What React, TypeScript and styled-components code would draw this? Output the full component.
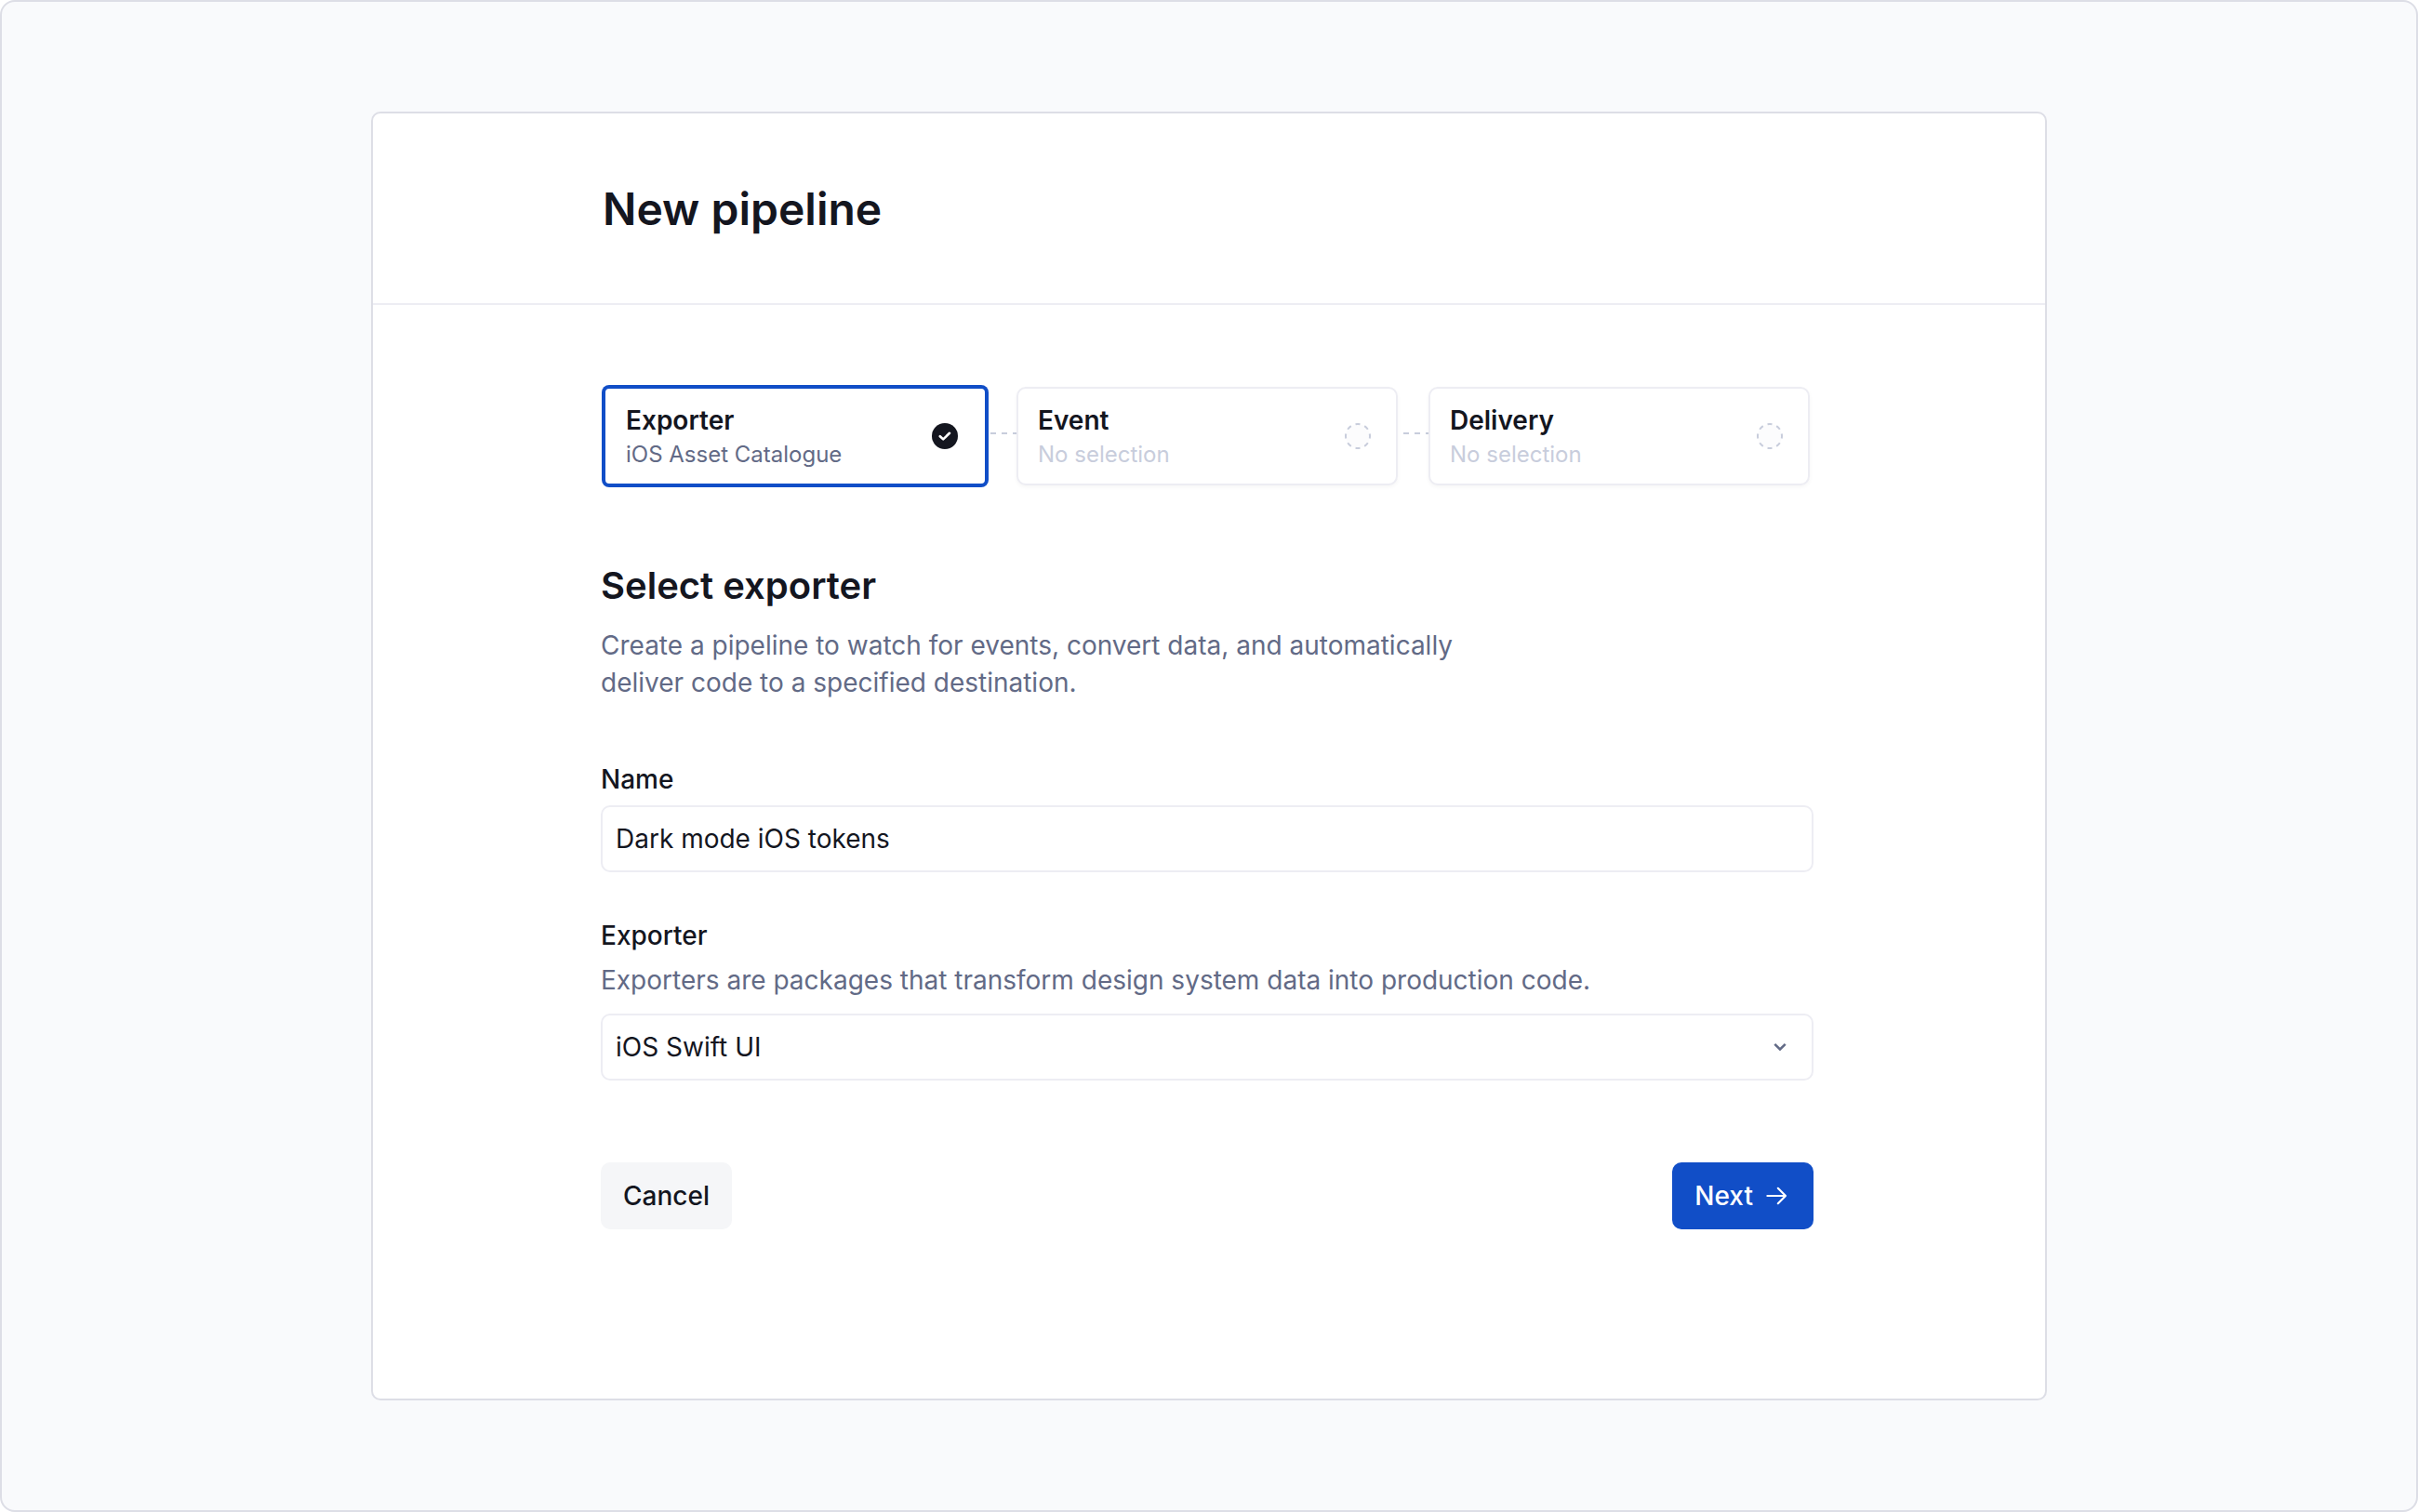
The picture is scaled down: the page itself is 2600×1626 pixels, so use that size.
import React, { useState } from "react";
import styled, { createGlobalStyle } from "styled-components";

const colors = {
  ink: "#14161f",
  muted: "#626a86",
  faint: "#c8cddc",
  line: "#ededf3",
  frame: "#dddee6",
  canvas: "#f9fafc",
  subtle: "#f5f6f8",
  primary: "#114ec7",
};

const GlobalStyle = createGlobalStyle`
  *, *::before, *::after { box-sizing: border-box; }
  body {
    margin: 0;
    background: #ffffff;
    color: ${colors.ink};
    font-family: Inter, "Liberation Sans", sans-serif;
    font-size: 28px;
    line-height: 40px;
    -webkit-font-smoothing: antialiased;
  }
  button, input, select { font: inherit; color: inherit; }
`;

const Canvas = styled.main`
  display: flex;
  justify-content: center;
  min-height: 100vh;
  padding: 118px 48px;
  background: ${colors.canvas};
  border: 2px solid ${colors.frame};
  border-radius: 16px;
`;

const Panel = styled.section`
  width: 100%;
  max-width: 1802px;
  background: #ffffff;
  border: 2px solid ${colors.frame};
  border-radius: 10px;
`;

const PanelHeader = styled.header`
  padding: 75px 247px 73px;
  border-bottom: 2px solid ${colors.line};
`;

const Title = styled.h1`
  margin: 0;
  font-size: 48px;
  line-height: 56px;
  font-weight: 600;
`;

const Form = styled.form`
  display: flex;
  flex-direction: column;
  padding: 88px 249px 88px 245px;
`;

/* The dashed connector runs behind the whole row and shows in the gaps. */
const Steps = styled.ol`
  display: grid;
  grid-template-columns: repeat(3, 1fr);
  gap: 33px;
  margin: 0 4px;
  padding: 0;
  list-style: none;
  background: linear-gradient(90deg, ${colors.faint} 6px, transparent 6px) 7px
    49px / 12px 2px repeat-x;
`;

const StepItem = styled.li`
  display: flex;
`;

const StepButton = styled.button<{ $active?: boolean }>`
  flex: 1;
  display: flex;
  align-items: center;
  justify-content: space-between;
  margin: ${(p) => (p.$active ? "0 -1px" : "0")};
  padding: 14px ${(p) => (p.$active ? 29 : 27)}px 14px
    ${(p) => (p.$active ? 22 : 21)}px;
  text-align: left;
  background: #ffffff;
  border: 2px solid ${(p) => (p.$active ? colors.primary : colors.line)};
  border-radius: ${(p) => (p.$active ? 6 : 10)}px;
  box-shadow: ${(p) =>
    p.$active
      ? `0 0 0 2px ${colors.primary}`
      : "0 2px 4px rgba(20, 22, 31, 0.04)"};
`;

const StepText = styled.span`
  display: flex;
  flex-direction: column;
`;

const StepName = styled.span`
  font-weight: 600;
`;

const StepValue = styled.span<{ $empty?: boolean }>`
  font-size: 24px;
  line-height: 34px;
  color: ${(p) => (p.$empty ? colors.faint : colors.muted)};
`;

const SectionTitle = styled.h2`
  margin: 84px 0 20px;
  font-size: 40px;
  line-height: 48px;
  font-weight: 600;
`;

const Text = styled.p`
  max-width: 960px;
  margin: 0;
  color: ${colors.muted};
`;

const Hint = styled.p`
  margin: 8px 0;
  color: ${colors.muted};
`;

const Field = styled.div<{ $gap: number }>`
  display: flex;
  flex-direction: column;
  margin-top: ${(p) => p.$gap}px;
`;

const Label = styled.label`
  font-weight: 500;
`;

const TextInput = styled.input`
  width: 100%;
  height: 72px;
  margin-top: 8px;
  padding: 0 14px;
  background: #ffffff;
  border: 2px solid ${colors.line};
  border-radius: 10px;
`;

const SelectWrap = styled.div`
  position: relative;
  margin-top: 8px;
`;

const Select = styled.select`
  display: block;
  width: 100%;
  height: 72px;
  padding: 0 64px 0 14px;
  appearance: none;
  background: #ffffff;
  border: 2px solid ${colors.line};
  border-radius: 10px;
`;

const SelectArrow = styled.svg`
  position: absolute;
  top: 24px;
  right: 24px;
  pointer-events: none;
`;

const Actions = styled.div`
  display: flex;
  justify-content: space-between;
  margin-top: 88px;
`;

const Button = styled.button<{ $primary?: boolean }>`
  display: flex;
  align-items: center;
  gap: 12px;
  height: 72px;
  padding: 0 24px;
  font-weight: 500;
  border: 0;
  border-radius: 10px;
  color: ${(p) => (p.$primary ? "#ffffff" : colors.ink)};
  background: ${(p) => (p.$primary ? colors.primary : colors.subtle)};
`;

const DoneIcon = () => (
  <svg width="28" height="28" viewBox="0 0 28 28" aria-hidden="true">
    <circle cx="14" cy="14" r="14" fill={colors.ink} />
    <path
      d="M8.8 14.2 12.2 17.4 19 10.8"
      fill="none"
      stroke="#ffffff"
      strokeWidth="2.6"
      strokeLinecap="round"
      strokeLinejoin="round"
    />
  </svg>
);

const EmptyIcon = () => (
  <svg width="28" height="28" viewBox="0 0 28 28" aria-hidden="true">
    <circle
      cx="14"
      cy="14"
      r="13"
      fill="#fcfcfd"
      stroke={colors.faint}
      strokeWidth="2"
      pathLength="80"
      strokeDasharray="5 5"
      strokeDashoffset="2.5"
    />
  </svg>
);

const steps = [
  { name: "Exporter", value: "iOS Asset Catalogue", active: true },
  { name: "Event", value: "" },
  { name: "Delivery", value: "" },
];

export default function App() {
  const [name, setName] = useState("Dark mode iOS tokens");

  return (
    <>
      <GlobalStyle />
      <Canvas>
        <Panel>
          <PanelHeader>
            <Title>New pipeline</Title>
          </PanelHeader>
          <Form onSubmit={(e) => e.preventDefault()}>
            <Steps>
              {steps.map((step) => (
                <StepItem key={step.name}>
                  <StepButton
                    type="button"
                    $active={step.active}
                    aria-current={step.active ? "step" : undefined}
                  >
                    <StepText>
                      <StepName>{step.name}</StepName>
                      <StepValue $empty={!step.value}>
                        {step.value || "No selection"}
                      </StepValue>
                    </StepText>
                    {step.value ? <DoneIcon /> : <EmptyIcon />}
                  </StepButton>
                </StepItem>
              ))}
            </Steps>

            <SectionTitle>Select exporter</SectionTitle>
            <Text>
              Create a pipeline to watch for events, convert data, and
              automatically deliver code to a specified destination.
            </Text>

            <Field $gap={64}>
              <Label htmlFor="pipeline-name">Name</Label>
              <TextInput
                id="pipeline-name"
                type="text"
                value={name}
                onChange={(e) => setName(e.target.value)}
              />
            </Field>

            <Field $gap={48}>
              <Label htmlFor="pipeline-exporter">Exporter</Label>
              <Hint id="exporter-hint">
                Exporters are packages that transform design system data into
                production code.
              </Hint>
              <SelectWrap>
                <Select id="pipeline-exporter" aria-describedby="exporter-hint">
                  <option>iOS Swift UI</option>
                </Select>
                <SelectArrow
                  width="24"
                  height="24"
                  viewBox="0 0 24 24"
                  aria-hidden="true"
                >
                  <path
                    d="M6.3 8.9 12 14.4 17.7 8.9"
                    fill="none"
                    stroke={colors.muted}
                    strokeWidth="2.6"
                  />
                </SelectArrow>
              </SelectWrap>
            </Field>

            <Actions>
              <Button type="button">Cancel</Button>
              <Button type="submit" $primary>
                Next
                <svg width="29" height="28" viewBox="0 0 29 28" aria-hidden="true">
                  <path
                    d="M3.4 14H23M14.8 5.8 23 14 14.8 22.2"
                    fill="none"
                    stroke="currentColor"
                    strokeWidth="2.2"
                    strokeLinecap="round"
                    strokeLinejoin="round"
                  />
                </svg>
              </Button>
            </Actions>
          </Form>
        </Panel>
      </Canvas>
    </>
  );
}
